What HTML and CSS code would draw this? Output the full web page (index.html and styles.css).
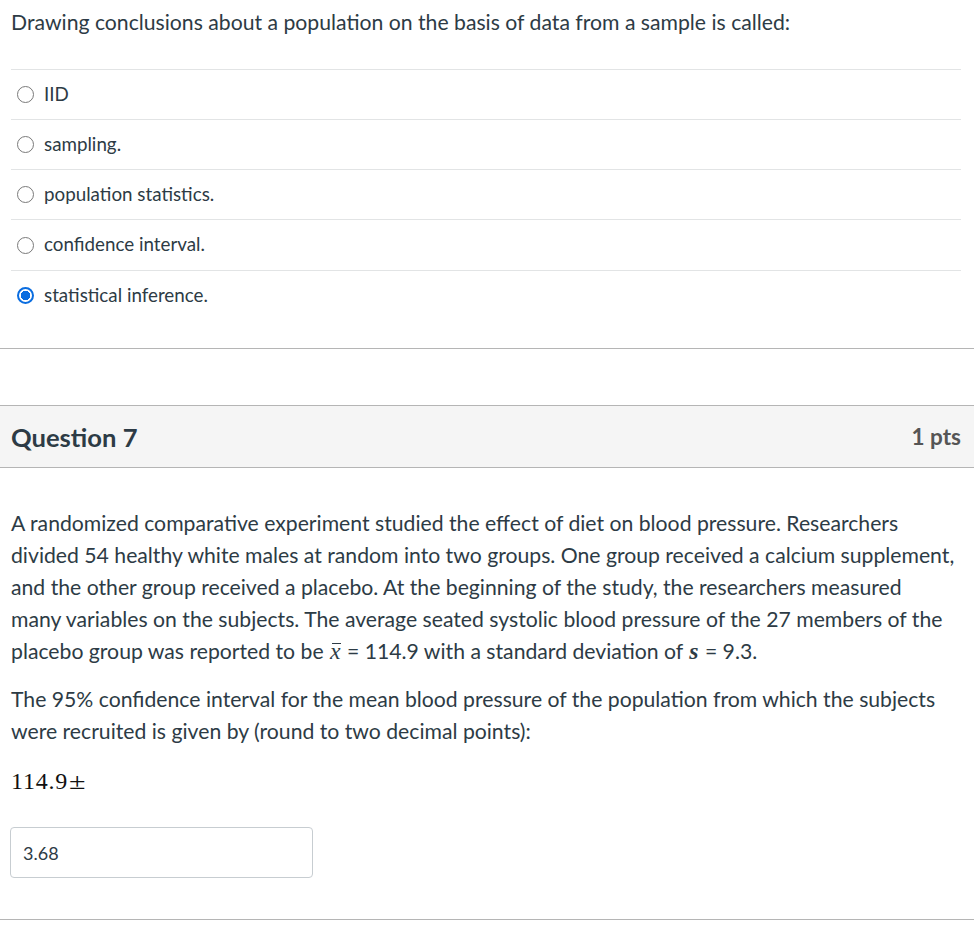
FILE: index.html
```html
<!DOCTYPE html>
<html lang="en">
<head>
<meta charset="utf-8">
<title>Quiz</title>
<link rel="stylesheet" href="styles.css">
</head>
<body>
<div class="quiz">
  <section class="question">
    <div class="question-text">Drawing conclusions about a population on the basis of data from a sample is called:</div>
    <div class="answers">
      <div class="answer"><span class="radio"></span><span class="label">IID</span></div>
      <div class="answer"><span class="radio"></span><span class="label">sampling.</span></div>
      <div class="answer"><span class="radio"></span><span class="label">population statistics.</span></div>
      <div class="answer"><span class="radio"></span><span class="label">confidence interval.</span></div>
      <div class="answer"><span class="radio checked"></span><span class="label">statistical inference.</span></div>
    </div>
  </section>
  <hr class="divider">
  <section class="question q7">
    <div class="header">
      <h2 class="title">Question 7</h2>
      <div class="points">1 pts</div>
    </div>
    <div class="body">
      <p>A randomized comparative experiment studied the effect of diet on blood pressure. Researchers divided 54 healthy white males at random into two groups. One group received a calcium supplement, and the other group received a placebo. At the beginning of the study, the researchers measured<br>many variables on the subjects. The average seated systolic blood pressure of the 27 members of the placebo group was reported to be <span class="math xbar">x</span> = 114.9 with a standard deviation of <span class="math bold">s</span> = 9.3.</p>
      <p>The 95% confidence interval for the mean blood pressure of the population from which the subjects were recruited is given by (round to two decimal points):</p>
      <p class="formula">114.9<span class="pm">±</span></p>
      <div class="input">3.68</div>
    </div>
  </section>
  <hr class="divider bottom">
</div>
</body>
</html>
```
FILE: styles.css
```css
html, body {
  margin: 0;
  padding: 0;
  background: #fff;
}
body {
  font-family: Lato, "Open Sans", sans-serif;
  color: #2d3b45;
}
.quiz {
  width: 974px;
}
.question-text {
  font-size: 21.2px;
  line-height: 26px;
  padding: 9px 6px 0 11px;
  height: 37px;
}
.answers {
  margin: 23px 13px 0 11px;
}
.answer {
  display: flex;
  align-items: center;
  box-sizing: border-box;
  height: 50px;
  border-top: 1px solid #e2e4e5;
  font-size: 18.8px;
}
.answer:nth-child(4) {
  height: 51px;
}
.radio {
  box-sizing: border-box;
  width: 17px;
  height: 17px;
  border: 1px solid #7a7a7a;
  border-radius: 50%;
  margin: 0 10px 0 6px;
  background: #fff;
  flex: none;
}
.radio.checked {
  border: 2px solid #0a6de0;
  background: radial-gradient(circle, #0a6de0 0 4.5px, #fff 5px);
}
.label {
  margin-top: -3px;
}
.divider {
  border: 0;
  border-top: 1px solid #b5b5b5;
  margin: 28px 0 0;
  height: 0;
}
.q7 {
  margin-top: 56px;
}
.header {
  display: flex;
  align-items: center;
  justify-content: space-between;
  height: 61px;
  background: #f5f5f5;
  border-top: 1px solid #b5b5b5;
  border-bottom: 1px solid #b5b5b5;
  padding: 0 13px 0 11px;
}
.title {
  margin: 0;
  font-size: 25.6px;
  font-weight: 700;
  color: #2d3b45;
}
.points {
  font-size: 22.5px;
  font-weight: 700;
  color: #555;
}
.body {
  padding: 39px 6px 0 11px;
}
.body p {
  margin: 0 0 16px;
  font-size: 21.2px;
  line-height: 32px;
}
.math {
  font-family: "Liberation Serif", "DejaVu Serif", serif;
  font-style: italic;
  font-size: 1.12em;
  padding: 0 1px;
}
.xbar {
  display: inline-block;
  position: relative;
  line-height: 1;
}
.xbar::after {
  content: "";
  position: absolute;
  left: 3px;
  right: 1px;
  top: 3px;
  border-top: 1px solid currentColor;
}
.bold {
  font-weight: 700;
}
.body p.formula {
  font-family: "Liberation Serif", "DejaVu Serif", serif;
  font-size: 24px;
  letter-spacing: 0.8px;
  color: #111;
  margin-top: 18px;
  margin-bottom: 30px;
}
.pm {
  display: inline-block;
  margin-left: 1px;
  transform: scaleX(1.25);
  transform-origin: left;
}
.input {
  box-sizing: border-box;
  width: 303px;
  height: 51px;
  border: 1px solid #c7cdd1;
  border-radius: 4px;
  margin-left: -1px;
  padding: 0 12px;
  display: flex;
  align-items: center;
  font-size: 18px;
}
.divider.bottom {
  margin-top: 41px;
}
```
